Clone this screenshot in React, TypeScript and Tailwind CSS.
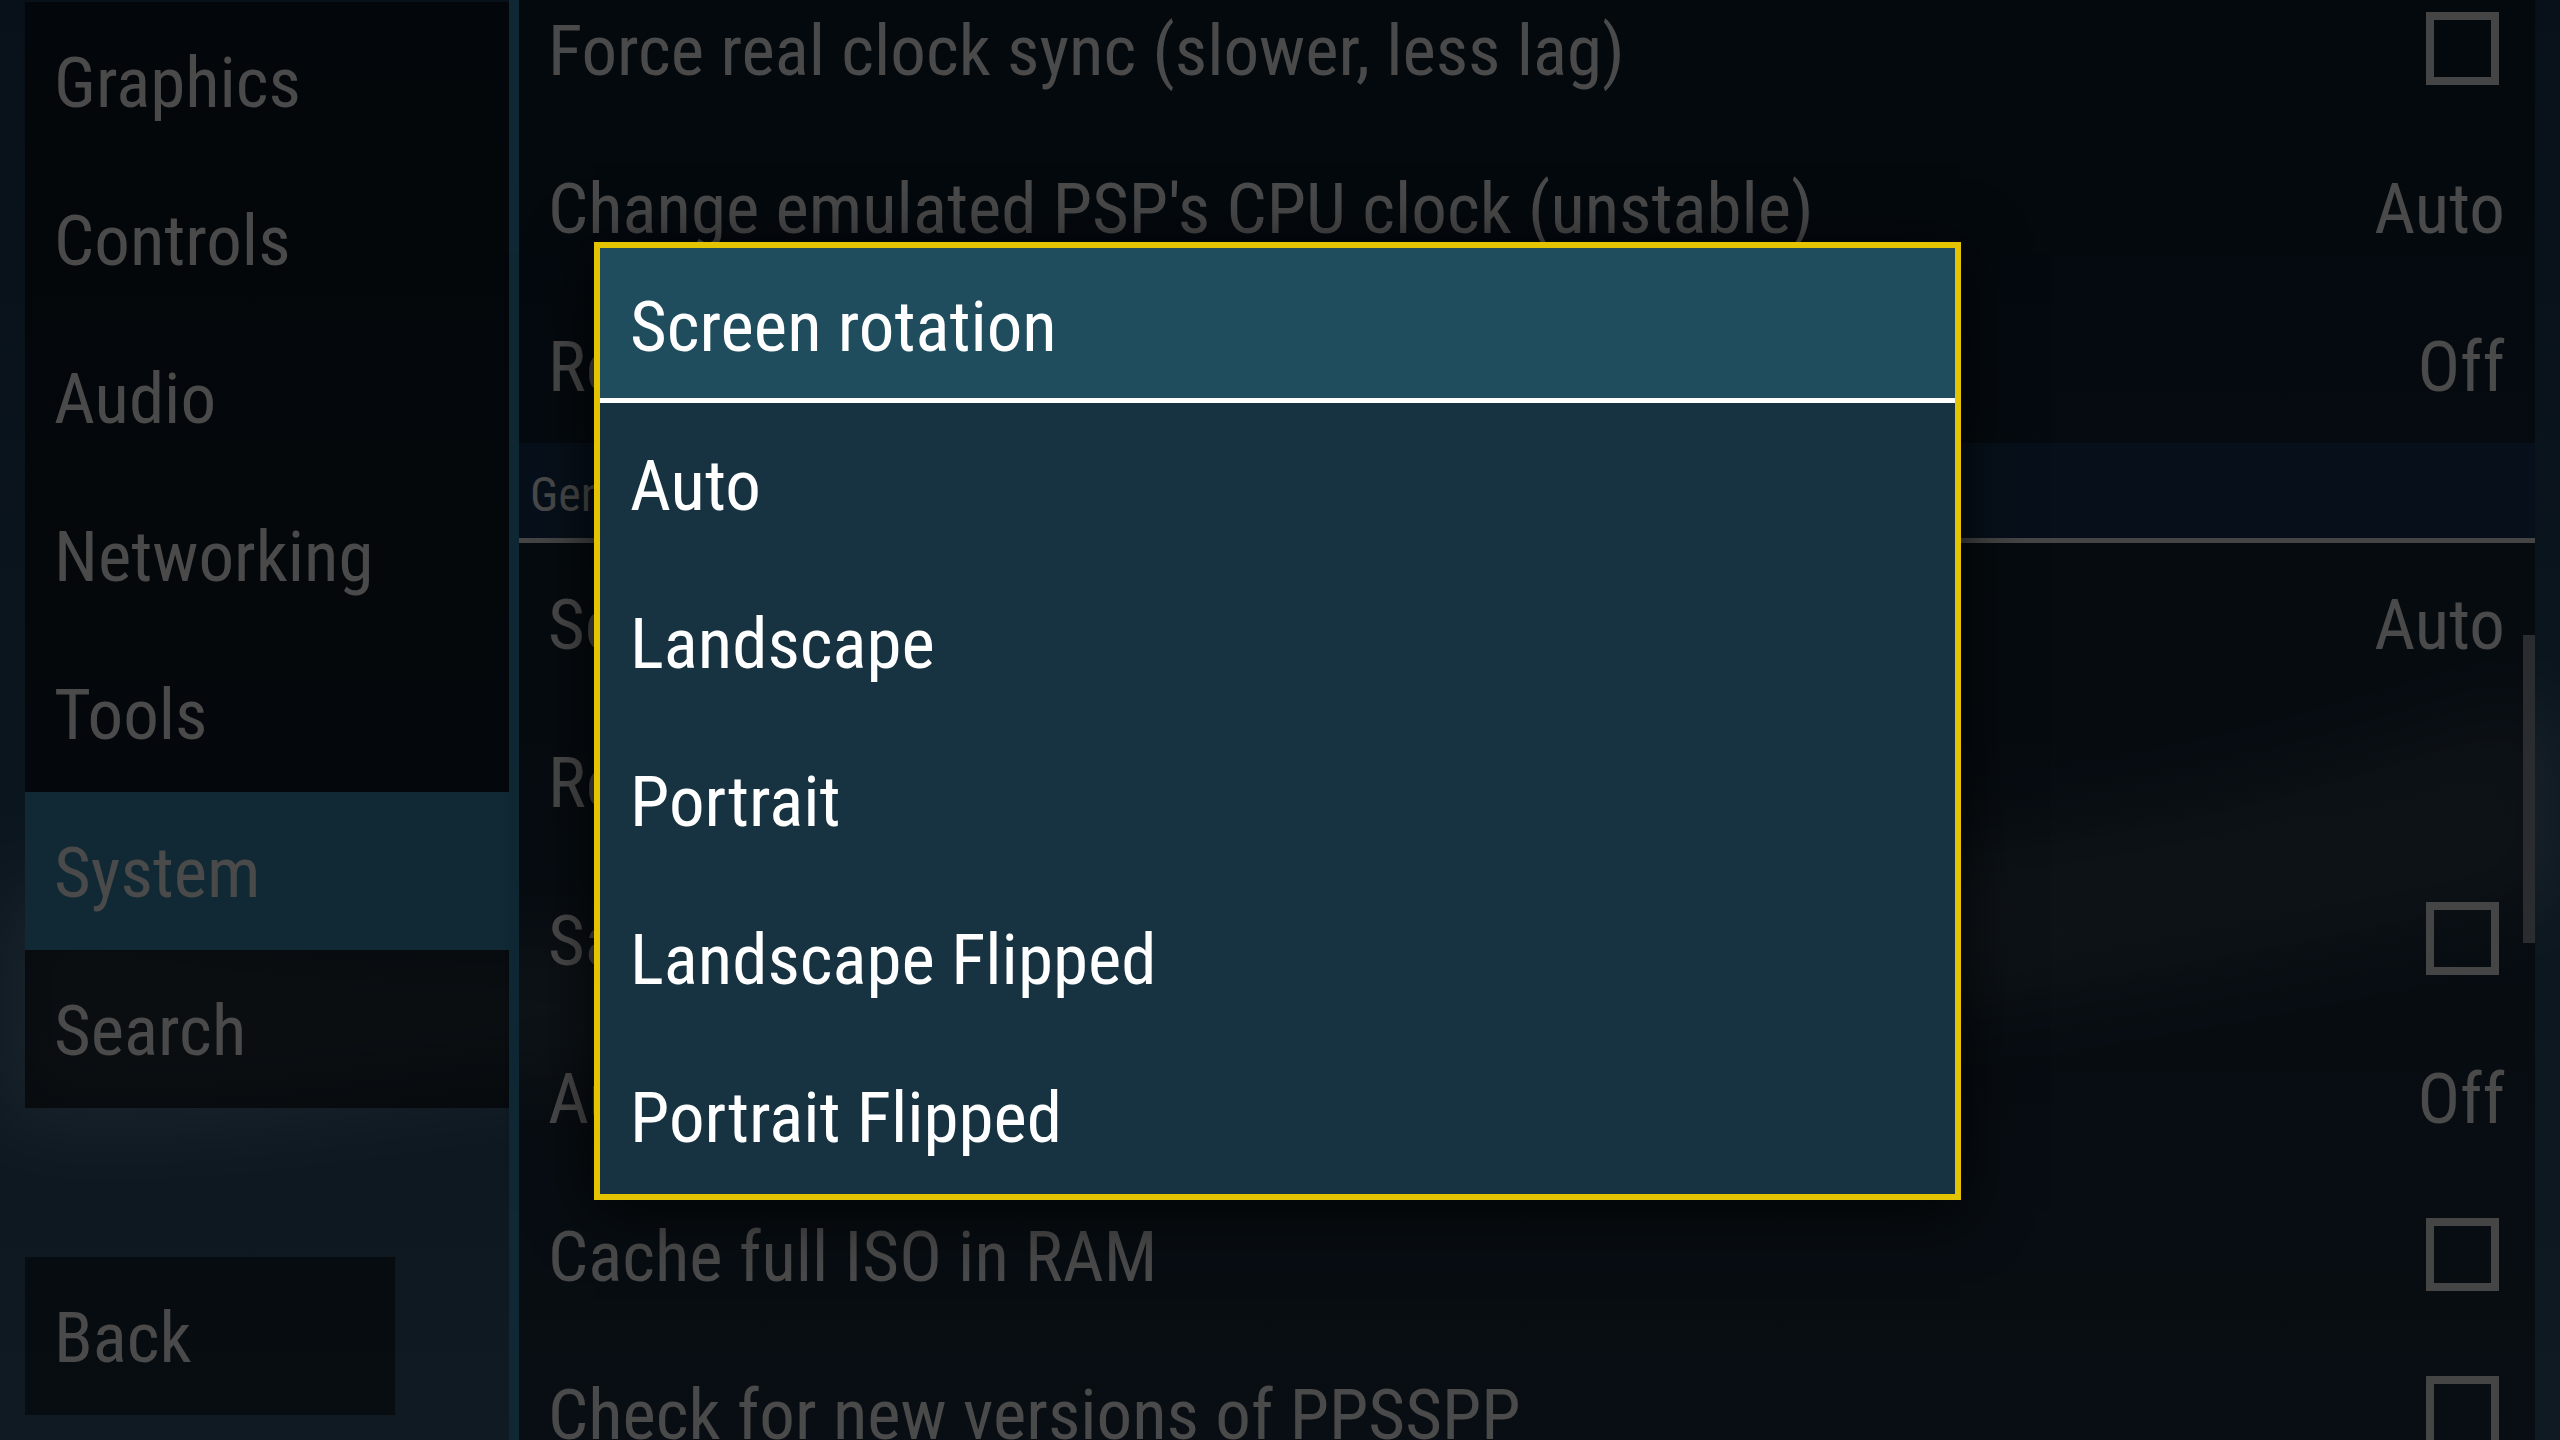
import React from 'react';

type Row = { label: string; value?: string; check?: boolean };

const navItems = ['Graphics', 'Controls', 'Audio', 'Networking', 'Tools', 'System', 'Search'];

const emulationRows: Row[] = [
  { label: 'Force real clock sync (slower, less lag)', check: true },
  { label: "Change emulated PSP's CPU clock (unstable)", value: 'Auto' },
  { label: 'Rewind Snapshot Frequency (mem hog)', value: 'Off' },
];

const generalRows: Row[] = [
  { label: 'Screen rotation', value: 'Auto' },
  { label: 'Restore Default Settings' },
  { label: 'Savestate slot backups', check: true },
  { label: 'Auto load savestate', value: 'Off' },
  { label: 'Cache full ISO in RAM', check: true },
  { label: 'Check for new versions of PPSSPP', check: true },
];

const choices = ['Auto', 'Landscape', 'Portrait', 'Landscape Flipped', 'Portrait Flipped'];

function SettingRow({ row }: { row: Row }) {
  return (
    <div className="h-[158px] shrink-0 flex items-center justify-between pl-[29px] pr-[30px] text-[71px] leading-none text-[#4a4a4a]">
      <span className="whitespace-nowrap pt-[4px]">{row.label}</span>
      {row.value && <span className="pt-[4px]">{row.value}</span>}
      {row.check && <div className="w-[73px] h-[73px] border-[8px] border-[#454545] mr-[6px]" />}
    </div>
  );
}

function App() {
  return (
    <div className="relative w-[2560px] h-[1440px] overflow-hidden bg-gradient-to-b from-[#08111a] via-[#0b151e] to-[#101a23] font-[family-name:'Roboto_Condensed',Roboto,sans-serif]">
      {/* background wave */}
      <svg className="absolute inset-0" width="2560" height="1440" viewBox="0 0 2560 1440">
        <defs>
          <filter id="blur" x="-20%" y="-20%" width="140%" height="140%">
            <feGaussianBlur stdDeviation="40" />
          </filter>
        </defs>
        <path
          d="M0 880 C 500 1000, 1100 900, 1700 860 S 2400 720, 2560 700 L2560 900 C 2200 980, 1700 1080, 1100 1060 S 300 1150, 0 1120 Z"
          fill="#ffffff"
          opacity="0.05"
          filter="url(#blur)"
        />
      </svg>

      <div className="relative flex h-full pl-[25px] pr-[25px]">
        {/* side menu */}
        <div className="w-[484px] flex flex-col pt-[2px]">
          {navItems.map((item) => (
            <div
              key={item}
              className={`h-[158px] flex items-center pl-[29px] pt-[3px] text-[71px] leading-none text-[#4a4a4a] ${
                item === 'System' ? 'bg-[#112934]' : 'bg-black/60'
              }`}
            >
              {item}
            </div>
          ))}
          <div className="mt-[149px] w-[370px] h-[158px] flex items-center pl-[29px] pt-[3px] bg-black/50 text-[71px] leading-none text-[#4a4a4a]">
            Back
          </div>
        </div>

        <div className="w-[10px] bg-[#0f2833]" />

        {/* settings list */}
        <div className="relative flex-1 bg-black/45 overflow-hidden">
          <div className="flex flex-col -mt-[31px]">
            {emulationRows.map((r) => (
              <SettingRow key={r.label} row={r} />
            ))}
            <div className="h-[95px] flex items-center pl-[11px] pt-[8px] bg-[#0a1a2a]/40 text-[48px] leading-none text-[#4a4a4a]">
              General
            </div>
            <div className="h-[5px] bg-[#454545]" />
            {generalRows.map((r) => (
              <SettingRow key={r.label} row={r} />
            ))}
          </div>
          <div className="absolute right-0 top-[635px] w-[12px] h-[308px] bg-[#2a2c2f]" />
        </div>
      </div>

      {/* popup */}
      <div className="absolute left-[594px] top-[242px] w-[1367px] h-[958px] border-[6px] border-[#e4c300] flex flex-col shadow-[0_10px_60px_rgba(0,0,0,0.8)]">
        <div className="h-[150px] shrink-0 flex items-center pl-[30px] pt-[7px] bg-[#1f4d5e] text-white text-[71px] leading-none">
          Screen rotation
        </div>
        <div className="h-[5px] shrink-0 bg-white" />
        <div className="flex-1 flex flex-col bg-[#173341]">
          {choices.map((c) => (
            <div key={c} className="h-[158px] flex items-center pl-[30px] pt-[7px] text-white text-[71px] leading-none">
              {c}
            </div>
          ))}
        </div>
      </div>
    </div>
  );
}

export default App;
